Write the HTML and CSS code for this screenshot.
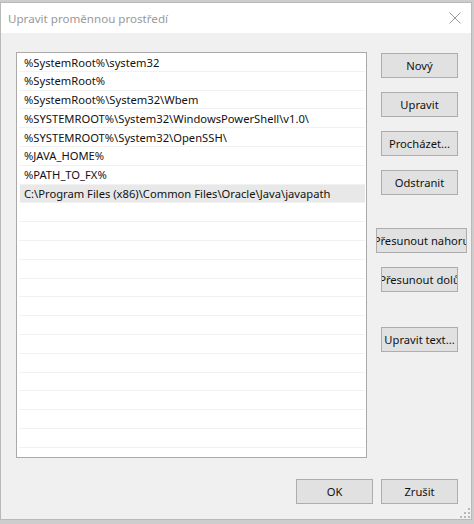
FILE: index.html
```html
<!DOCTYPE html>
<html lang="cs">
<head>
<meta charset="utf-8">
<title>Upravit proměnnou prostředí</title>
<link rel="stylesheet" href="styles.css">
</head>
<body>
<div class="window">
  <div class="titlebar">
    <span class="title">Upravit proměnnou prostředí</span>
    <svg class="close" width="12" height="12" viewBox="0 0 12 12"><path d="M0.5 0.5 L11.5 11.5 M11.5 0.5 L0.5 11.5" stroke="#9a9a9a" stroke-width="1" fill="none"/></svg>
  </div>
  <div class="body">
    <div class="main">
      <div class="list">
        <div class="row">%SystemRoot%\system32</div>
        <div class="row">%SystemRoot%</div>
        <div class="row">%SystemRoot%\System32\Wbem</div>
        <div class="row">%SYSTEMROOT%\System32\WindowsPowerShell\v1.0\</div>
        <div class="row">%SYSTEMROOT%\System32\OpenSSH\</div>
        <div class="row">%JAVA_HOME%</div>
        <div class="row">%PATH_TO_FX%</div>
        <div class="row selected">C:\Program Files (x86)\Common Files\Oracle\Java\javapath</div>
        <div class="row"></div><div class="row"></div><div class="row"></div><div class="row"></div>
        <div class="row"></div><div class="row"></div><div class="row"></div><div class="row"></div>
        <div class="row"></div><div class="row"></div><div class="row"></div><div class="row"></div>
        <div class="row"></div><div class="row"></div>
      </div>
      <div class="side">
        <button class="btn">Nový</button>
        <button class="btn">Upravit</button>
        <button class="btn">Procházet...</button>
        <button class="btn">Odstranit</button>
        <button class="btn wide group">Přesunout nahoru</button>
        <button class="btn clip">Přesunout dolů</button>
        <button class="btn group2">Upravit text...</button>
      </div>
    </div>
    <div class="footer">
      <button class="btn">OK</button>
      <button class="btn">Zrušit</button>
    </div>
    <svg class="grip" width="10" height="10" viewBox="0 0 10 10">
      <rect x="8" y="0" width="2" height="2" fill="#b8b8b8"/>
      <rect x="4" y="4" width="2" height="2" fill="#b8b8b8"/>
      <rect x="8" y="4" width="2" height="2" fill="#b8b8b8"/>
      <rect x="0" y="8" width="2" height="2" fill="#b8b8b8"/>
      <rect x="4" y="8" width="2" height="2" fill="#b8b8b8"/>
      <rect x="8" y="8" width="2" height="2" fill="#b8b8b8"/>
    </svg>
  </div>
</div>
</body>
</html>
```

FILE: styles.css
```css
html, body {
  margin: 0;
  padding: 0;
}
body {
  background: #cdcdcd;
  width: 474px;
  height: 524px;
  overflow: hidden;
  font-family: "Noto Sans", "Open Sans", sans-serif;
  font-size: 11.2px;
  color: #111111;
}
.window {
  margin-top: 2px;
  width: 470px;
  height: 516px;
  border: 1px solid #b9b9b9;
  background: #f0f0f0;
  display: flex;
  flex-direction: column;
}
.titlebar {
  height: 30px;
  background: #ffffff;
  display: flex;
  align-items: center;
  justify-content: space-between;
  padding: 0 10px 0 7px;
  flex: none;
}
.title {
  color: #999999;
  font-size: 11.6px;
  margin-top: 0;
}
.close {
  display: block;
  margin-top: -1px;
}
.body {
  flex: 1;
  padding: 19px 13px 0 15px;
  position: relative;
}
.main {
  display: flex;
  gap: 14px;
}
.list {
  flex: none;
  width: 348px;
  height: 404px;
  border: 1px solid #aaaaaa;
  background: #ffffff;
  overflow: hidden;
  padding-right: 1px;
  box-sizing: content-box;
}
.row {
  height: 16.3px;
  line-height: 16.3px;
  padding-top: 1.5px;
  border-bottom: 1px solid #f2f2f2;
  margin-left: 2px;
  padding-left: 5px;
  white-space: nowrap;
  overflow: hidden;
}
.row.selected {
  background: #e8e8e8;
  margin-left: 3px;
  padding-left: 4px;
}
.side {
  flex: none;
  display: flex;
  flex-direction: column;
  align-items: flex-start;
  padding-top: 1px;
}
.btn {
  width: 77px;
  height: 25px;
  background: #e1e1e1;
  border: 1px solid #adadad;
  font-family: "Noto Sans", "Open Sans", sans-serif;
  font-size: 11.2px;
  color: #111111;
  padding: 0;
  margin: 0 0 14px 0;
  white-space: nowrap;
  overflow: hidden;
  display: flex;
  align-items: center;
  justify-content: center;
  box-sizing: border-box;
}
.btn.group {
  margin-top: 19px;
}
.btn.wide {
  width: 91px;
  margin-left: -5px;
}
.btn.group2 {
  margin-top: 21px;
}
.footer {
  display: flex;
  justify-content: flex-end;
  gap: 8px;
  margin-top: 21px;
}
.footer .btn {
  margin: 0;
}
.grip {
  position: absolute;
  right: 1px;
  bottom: 1px;
}
```
